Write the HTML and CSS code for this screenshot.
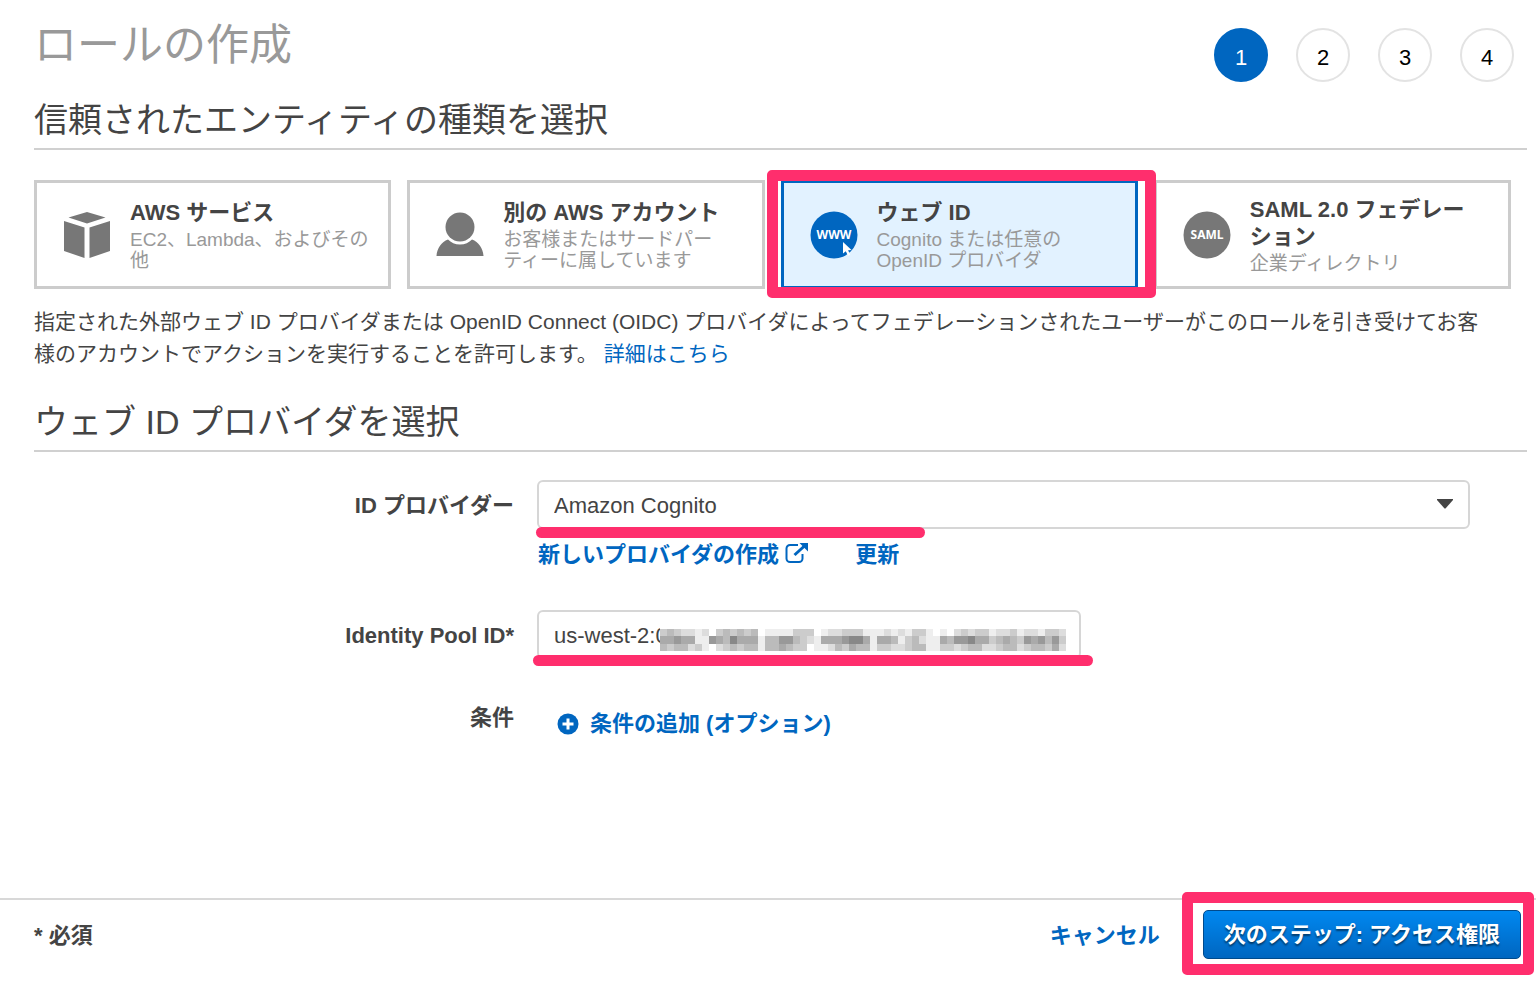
FILE: index.html
```html
<!DOCTYPE html>
<html lang="ja">
<head>
<meta charset="utf-8">
<meta name="viewport" content="width=device-width, initial-scale=1">
<title>ロールの作成</title>
<link rel="stylesheet" href="styles.css">
</head>
<body>
<main class="content">
  <header class="page-header">
    <h1 class="page-title">ロールの作成</h1>
    <ol class="steps">
      <li class="step step-current" aria-current="step">1</li>
      <li class="step">2</li>
      <li class="step">3</li>
      <li class="step">4</li>
    </ol>
  </header>

  <section>
    <h2 class="section-title">信頼されたエンティティの種類を選択</h2>
    <div class="cards">
      <button type="button" class="card" aria-pressed="false">
        <svg class="card-icon" viewBox="0 0 48 48" aria-hidden="true">
          <path d="M5.500 6.500 24 1l18.500 5.500L24 12.500zM1 10l20.500 6.500V47L1 40zM47 10l-20.500 6.500V47L47 40z"/>
        </svg>
        <span class="card-text">
          <span class="card-title">AWS サービス</span>
          <span class="card-desc">EC2、Lambda、およびその他</span>
        </span>
      </button>
      <button type="button" class="card" aria-pressed="false">
        <svg class="card-icon" viewBox="0 0 48 48" aria-hidden="true">
          <circle cx="24" cy="16" r="14.500"/>
          <path d="M.5 45C1 37 5.500 31 12 28.500c3 3 7 5 12 5s9-2 12-5C42.500 31 47 37 47.500 45z"/>
        </svg>
        <span class="card-text">
          <span class="card-title">別の AWS アカウント</span>
          <span class="card-desc">お客様またはサードパーティーに属しています</span>
        </span>
      </button>
      <button type="button" class="card card-selected" aria-pressed="true">
        <svg class="card-icon" viewBox="0 0 48 48" aria-hidden="true">
          <circle cx="24" cy="24" r="23.500"/>
          <text class="icon-text" x="24" y="28">WWW</text>
          <path class="icon-cursor" d="M33 31v11.500l2.800-2.300 2.200 4.600 2.200-1-2.100-4.500 3.400-.3z"/>
        </svg>
        <span class="card-text">
          <span class="card-title">ウェブ ID</span>
          <span class="card-desc">Cognito または任意の OpenID プロバイダ</span>
        </span>
      </button>
      <button type="button" class="card" aria-pressed="false">
        <svg class="card-icon" viewBox="0 0 48 48" aria-hidden="true">
          <circle cx="24" cy="24" r="23.500"/>
          <text class="icon-text" x="24" y="28">SAML</text>
        </svg>
        <span class="card-text">
          <span class="card-title">SAML 2.0 フェデレーション</span>
          <span class="card-desc">企業ディレクトリ</span>
        </span>
      </button>
    </div>
    <p class="description">指定された外部ウェブ ID プロバイダまたは OpenID Connect (OIDC) プロバイダによってフェデレーションされたユーザーがこのロールを引き受けてお客様のアカウントでアクションを実行することを許可します。 <a class="link" href="#details">詳細はこちら</a></p>
  </section>

  <section>
    <h2 class="section-title">ウェブ ID プロバイダを選択</h2>
    <form class="form" id="provider-form">
      <label class="form-label" for="provider">ID プロバイダー</label>
      <div class="form-field">
        <div class="select-box mark-under mark-short">
          <select class="control" id="provider">
            <option>Amazon Cognito</option>
          </select>
          <svg class="select-arrow" viewBox="0 0 16 10" aria-hidden="true"><path d="M0 0h16v1L8.500 9.500h-1L0 1z"/></svg>
        </div>
        <div class="field-links">
          <a class="link link-strong" href="#create">新しいプロバイダの作成
            <svg class="external-icon" viewBox="0 0 24 22" aria-hidden="true">
              <path class="external-frame" d="M13 3H5a3.500 3.500 0 0 0-3.500 3.500v10A3.500 3.500 0 0 0 5 20h9a3.500 3.500 0 0 0 3.500-3.500V12"/>
              <path class="external-shaft" d="M9.500 13 20 3.500"/>
              <path class="external-head" d="M14.500 1H23v8.500z"/>
            </svg>
          </a>
          <a class="link link-strong" href="#refresh">更新</a>
        </div>
      </div>

      <label class="form-label" for="pool">Identity Pool ID*</label>
      <div class="form-field">
        <div class="input-box mark-under mark-wide">
          <input class="control" id="pool" type="text" value="us-west-2:0" required>
          <svg class="mosaic" id="mosaic" viewBox="0 0 58 3" preserveAspectRatio="none" aria-hidden="true"></svg>
        </div>
      </div>

      <span class="form-label">条件</span>
      <div class="form-field">
        <a class="link link-strong add-link" href="#condition">
          <svg class="plus-icon" viewBox="0 0 22 22" aria-hidden="true"><circle cx="11" cy="11" r="10.500"/><path d="M11 5.500v11M5.500 11h11"/></svg>
          条件の追加 (オプション)
        </a>
      </div>
    </form>
  </section>
</main>

<footer class="footer">
  <span class="required-note">* 必須</span>
  <div class="footer-actions">
    <a class="link link-strong" href="#cancel">キャンセル</a>
    <div class="primary-box">
      <button class="primary" type="submit" form="provider-form">次のステップ: アクセス権限</button>
    </div>
  </div>
</footer>
<script src="mosaic.js"></script>
</body>
</html>
```

FILE: styles.css
```css
* {
  box-sizing: border-box;
}

:root {
  --blue: #0066c0;
  --pink: #ff2e6d;
  --text: #444;
  --line: #ccc;
}

body {
  margin: 0;
  min-height: 100vh;
  display: flex;
  flex-direction: column;
  background: #fff;
  color: var(--text);
  font-family: "Liberation Sans", "Noto Sans CJK JP", sans-serif;
  font-size: 22px;
  line-height: 32px;
  line-break: strict;
}

button,
input,
select {
  font: inherit;
  color: inherit;
}

.content {
  flex: 1;
  padding: 12px 9px 0 34px;
}

.page-header {
  display: flex;
  justify-content: space-between;
  height: 80px;
}

.page-title {
  margin: 0;
  color: #999;
  font-size: 43px;
  font-weight: 400;
  line-height: 66px;
}

.steps {
  display: flex;
  gap: 28px;
  margin: 16px 13px 0 0;
  padding: 0;
  list-style: none;
}

.step {
  width: 54px;
  height: 54px;
  border: 2px solid #e3e3e3;
  border-radius: 50%;
  color: #000;
  line-height: 56px;
  text-align: center;
}

.step-current {
  border-color: var(--blue);
  background: var(--blue);
  color: #fff;
}

.section-title {
  margin: 0;
  border-bottom: 2px solid #d0d0d0;
  font-size: 34px;
  font-weight: 400;
  line-height: 56px;
}

.cards {
  display: grid;
  grid-template-columns: repeat(4, 1fr);
  gap: 16px;
  margin: 30px 16px 0 0;
}

.card {
  position: relative;
  display: flex;
  align-items: center;
  gap: 19px;
  min-height: 109px;
  padding: 0 16px 0 26px;
  border: 3px solid var(--line);
  background: #fff;
  line-break: strict;
  text-align: left;
}

.card-selected {
  z-index: 1;
  border-color: var(--blue);
  background: #e2f2ff;
}

.card-selected::after {
  content: "";
  position: absolute;
  inset: -13px -21px -12px -17px;
  border: 11px solid var(--pink);
  border-radius: 5px;
}

.card-icon {
  flex: none;
  width: 48px;
  height: 48px;
  fill: #777;
}

.card-selected .card-icon {
  fill: var(--blue);
}

.icon-text {
  fill: #fff;
  font: 700 12px "Noto Sans", sans-serif;
  text-anchor: middle;
}

.icon-cursor {
  fill: #fff;
}

.card-text {
  flex: 1;
}

.card-title {
  display: block;
  margin-bottom: 3px;
  font-weight: 700;
  line-height: 27px;
}

.card-desc {
  display: block;
  color: #999;
  font-size: 19px;
  line-height: 21px;
}

.description {
  margin: 17px 0 24px;
  padding-right: 40px;
  font-size: 21px;
}

.link {
  color: var(--blue);
  text-decoration: none;
}

.link-strong {
  font-weight: 700;
}

.form {
  display: grid;
  grid-template-columns: 480px 1fr;
  column-gap: 23px;
  padding: 28px 57px 0 0;
}

.form-label {
  padding-top: 10px;
  font-weight: 700;
  text-align: right;
}

.control {
  display: block;
  width: 100%;
  height: 49px;
  padding: 2px 15px 0;
  border: 2px solid #d6d6d6;
  border-radius: 6px;
  background: #fff;
  appearance: none;
}

.select-box,
.input-box {
  position: relative;
}

.input-box {
  max-width: 544px;
  margin-bottom: 33px;
}

.select-arrow {
  position: absolute;
  top: 19px;
  right: 17px;
  width: 16px;
  height: 10px;
  fill: var(--text);
}

.mosaic {
  position: absolute;
  top: 15px;
  left: 123px;
  width: 406px;
  height: 26px;
  border-top: 4px solid #fff;
  background: #fff;
}

.mark-under::after {
  content: "";
  position: absolute;
  height: 11px;
  border-radius: 6px;
  background: var(--pink);
}

.mark-short::after {
  top: 47px;
  left: -1px;
  width: 389px;
}

.mark-wide::after {
  top: 45px;
  left: -4px;
  right: -12px;
}

.field-links {
  display: flex;
  gap: 46px;
  padding: 10px 0 39px 1px;
}

.external-icon {
  width: 24px;
  height: 22px;
  vertical-align: -2px;
  fill: none;
  stroke: var(--blue);
}

.external-frame {
  stroke-width: 2;
}

.external-shaft {
  stroke-width: 3;
}

.external-head {
  fill: var(--blue);
  stroke: none;
}

.add-link {
  display: flex;
  align-items: center;
  gap: 11px;
  padding: 16px 0 0 20px;
}

.plus-icon {
  width: 22px;
  height: 22px;
  fill: var(--blue);
  stroke: #fff;
  stroke-width: 3;
}

.plus-icon circle {
  stroke: none;
}

.footer {
  display: flex;
  align-items: flex-start;
  justify-content: space-between;
  min-height: 109px;
  padding: 10px 15px 0 34px;
  border-top: 2px solid #d8d8d8;
  font-weight: 700;
  line-height: 51px;
}

.footer-actions {
  display: flex;
  gap: 43px;
}

.primary-box {
  position: relative;
}

.primary-box::after {
  content: "";
  position: absolute;
  inset: -18px -13px -14px -21px;
  border: 11px solid var(--pink);
  border-radius: 5px;
  pointer-events: none;
}

.primary {
  display: block;
  height: 49px;
  padding: 0 20px;
  border: 1px solid #004a8c;
  border-radius: 5px;
  background: linear-gradient(#0088f0, #0066c0);
  color: #fff;
  font-weight: 700;
  line-height: 47px;
  text-shadow: 0 2px 2px rgba(0, 0, 0, 0.5);
}
```

FILE: mosaic.js
```js
// Grey level of each block that hides the pool ID, one hex digit per block.
const rows = [
  "cbcddedfcbcbcbfeeeecccfeddccceeededeccefefdcdcceddceddeccd",
  "aa9aaee9ab8aaaebb99bcdeaaa988aeaabecbdeeab998aacbabc9a9b9c",
  "bcbbdcefdcbcbbebbabccfeedbcabbeccddcbbeeccdcbbddcbbdcbbcad"
];
const mosaic = document.getElementById("mosaic");
rows.forEach((row, y) => {
  [...row].forEach((level, x) => {
    const block = document.createElementNS("http://www.w3.org/2000/svg", "rect");
    block.setAttribute("x", x);
    block.setAttribute("y", y);
    block.setAttribute("width", 1);
    block.setAttribute("height", 1);
    block.setAttribute("fill", "#" + level.repeat(3));
    block.setAttribute("shape-rendering", "crispEdges");
    mosaic.append(block);
  });
});
```
